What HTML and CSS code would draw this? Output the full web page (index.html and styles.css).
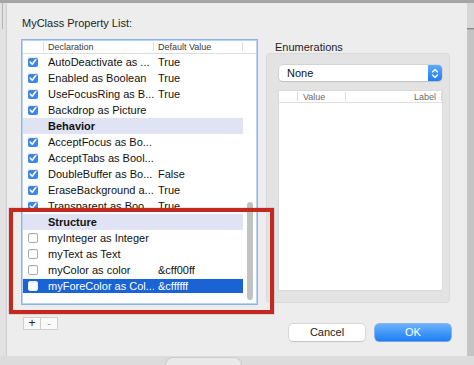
FILE: index.html
```html
<!DOCTYPE html>
<html>
<head>
<meta charset="utf-8">
<link rel="stylesheet" href="styles.css">
</head>
<body>
<div class="screen">
  <div class="topbar"></div>
  <div class="middle">
    <div class="side side-left"><div class="side-line"></div></div>
    <div class="dialog">
      <div class="col-left">
        <div class="title">MyClass Property List:</div>
        <div class="listbox">
          <div class="lhead">
            <div class="hc hc-check"></div>
            <div class="hc hc-decl">Declaration</div>
            <div class="hc hc-val">Default Value</div>
            <div class="hc hc-end"></div>
          </div>
          <div class="lbody">
            <div class="rows">
              <div class="row"><span class="cb on"></span><span class="decl">AutoDeactivate as ...</span><span class="val">True</span></div>
              <div class="row"><span class="cb on"></span><span class="decl">Enabled as Boolean</span><span class="val">True</span></div>
              <div class="row"><span class="cb on"></span><span class="decl">UseFocusRing as B...</span><span class="val">True</span></div>
              <div class="row"><span class="cb on"></span><span class="decl">Backdrop as Picture</span><span class="val"></span></div>
              <div class="row group"><span class="nocb"></span><span class="decl">Behavior</span><span class="val"></span></div>
              <div class="row"><span class="cb on"></span><span class="decl">AcceptFocus as Bo...</span><span class="val"></span></div>
              <div class="row"><span class="cb on"></span><span class="decl">AcceptTabs as Bool...</span><span class="val"></span></div>
              <div class="row"><span class="cb on"></span><span class="decl">DoubleBuffer as Bo...</span><span class="val">False</span></div>
              <div class="row"><span class="cb on"></span><span class="decl">EraseBackground a...</span><span class="val">True</span></div>
              <div class="row"><span class="cb on"></span><span class="decl">Transparent as Boo...</span><span class="val">True</span></div>
              <div class="row group"><span class="nocb"></span><span class="decl">Structure</span><span class="val"></span></div>
              <div class="row"><span class="cb"></span><span class="decl">myInteger as Integer</span><span class="val"></span></div>
              <div class="row"><span class="cb"></span><span class="decl">myText as Text</span><span class="val"></span></div>
              <div class="row"><span class="cb"></span><span class="decl">myColor as color</span><span class="val">&amp;cff00ff</span></div>
              <div class="row sel"><span class="cb"></span><span class="decl">myForeColor as Col...</span><span class="val">&amp;cffffff</span></div>
            </div>
            <div class="track"><div class="thumb"></div></div>
          </div>
        </div>
        <div class="pm">
          <div class="pmb plus">+</div>
          <div class="pmb minus">-</div>
        </div>
      </div>
      <div class="col-right">
        <div class="enum-label">Enumerations</div>
        <div class="groupbox">
          <div class="popup">
            <span class="popup-text">None</span>
            <span class="stepper">
              <svg width="8" height="11" viewBox="0 0 8 11"><path d="M1.5 4 L4 1.5 L6.5 4 M1.5 7 L4 9.5 L6.5 7" fill="none" stroke="#fff" stroke-width="1.3" stroke-linecap="round" stroke-linejoin="round"/></svg>
            </span>
          </div>
          <div class="etable">
            <div class="ehead">
              <div class="ehc ehc-first"></div>
              <div class="ehc ehc-value">Value</div>
              <div class="ehc ehc-label">Label</div>
            </div>
          </div>
        </div>
        <div class="buttons">
          <div class="btn cancel">Cancel</div>
          <div class="btn ok">OK</div>
        </div>
      </div>
    </div>
    <div class="side side-right"><div class="side-band"></div></div>
  </div>
  <div class="bottom"><div class="bump"></div></div>
  <div class="annot"></div>
</div>
</body>
</html>
```

FILE: styles.css
```css
* { box-sizing: border-box; }
html, body { margin: 0; padding: 0; }
body {
  font-family: "Liberation Sans", Arial, sans-serif;
  font-size: 11px;
  color: #1a1a1a;
  background: #dcdcdc;
}
.screen {
  position: relative;
  width: 474px;
  height: 365px;
  overflow: hidden;
  display: flex;
  flex-direction: column;
  background: #dedede;
}
.topbar {
  height: 3px;
  background: #a6a6a6;
  flex: none;
}
.middle {
  display: flex;
  height: 353px;
  flex: none;
}
.side { width: 7px; flex: none; }
.side-left {
  background: #e2e2e2;
  display: flex;
  justify-content: flex-start;
}
.side-line {
  width: 1px;
  margin-left: 2px;
  height: 26px;
  background: #b4b4b4;
}
.side-right {
  background: #d6d6d6;
  display: flex;
  flex-direction: column;
}
.side-band {
  margin-top: 25px;
  height: 2px;
  background: #8a8a8a;
  border-bottom: 1px solid #b0b0b0;
}
.side-right::after {
  content: "";
  flex: 1;
  background: #c4c4c4;
}
.dialog {
  width: 460px;
  flex: none;
  background: #ededed;
  display: flex;
  gap: 8px;
  padding-left: 14px;
  box-shadow: 0 1px 2px rgba(0,0,0,0.25);
}
.col-left {
  width: 237px;
  display: flex;
  flex-direction: column;
}
.title {
  margin-top: 13px;
  padding-left: 1px;
  height: 14px;
  line-height: 14px;
  font-size: 11px;
  color: #1e1e1e;
}
.listbox {
  margin-top: 9px;
  height: 266px;
  background: #fff;
  border: 1px solid #8db4e8;
  box-shadow: inset 0 0 0 1px #bcd4f3;
  padding: 1px;
  display: flex;
  flex-direction: column;
}
.lhead {
  height: 13px;
  display: flex;
  border-bottom: 1px solid #dedede;
  font-size: 9px;
  color: #3a3a3a;
  flex: none;
}
.hc {
  padding-left: 4px;
  border-right: 1px solid #dcdcdc;
  margin: 1px 0 2px;
  line-height: 10px;
}
.hc-check { width: 21px; }
.hc-decl { width: 110px; }
.hc-val { width: 89px; }
.hc-end { flex: 1; border-right: none; }
.lbody {
  flex: 1;
  display: flex;
}
.rows {
  width: 220px;
  display: flex;
  flex-direction: column;
}
.row {
  height: 16px;
  display: flex;
  align-items: center;
  font-size: 11px;
  color: #111;
  white-space: nowrap;
}
.cb, .nocb {
  width: 10px;
  height: 10px;
  margin-left: 5px;
  margin-right: 6px;
  flex: none;
  border-radius: 2px;
}
.cb {
  background: #fff;
  border: 1px solid #ababab;
  box-shadow: inset 0 1px 0 #f0f0f0;
}
.cb.on {
  border: none;
  background: #3b86e6 url("data:image/svg+xml;utf8,<svg xmlns='http://www.w3.org/2000/svg' width='10' height='10'><path d='M2.3 5.2 L4.2 7.2 L7.8 2.6' fill='none' stroke='white' stroke-width='1.6' stroke-linecap='round' stroke-linejoin='round'/></svg>") no-repeat center;
}
.decl {
  width: 110px;
  padding-left: 4px;
  overflow: hidden;
  flex: none;
}
.val {
  width: 89px;
  padding-left: 4px;
  flex: none;
}
.row.group {
  background: #dfe3f4;
  font-weight: bold;
}
.row.sel {
  background: #1a63d5;
  color: #fff;
  border-top: 1px solid #fff;
  border-bottom: 1px solid #fff;
}
.row.sel .cb {
  border: 1px solid #e8eefa;
  background: #fff;
}
.track {
  flex: 1;
}
.thumb {
  margin-top: 148px;
  margin-left: 4px;
  width: 6px;
  height: 98px;
  border-radius: 3px;
  background: #c2c2c2;
}
.pm {
  margin-top: 12px;
  margin-left: 2px;
  display: flex;
  height: 13px;
}
.pmb {
  width: 18px;
  height: 13px;
  background: #f9f9f9;
  border: 1px solid #cfcfcf;
  text-align: center;
  line-height: 11px;
  font-size: 12px;
}
.pmb.plus { color: #222; }
.pmb.minus { color: #9a9a9a; border-left: none; width: 17px; font-size: 11px; }
.col-right {
  width: 185px;
  display: flex;
  flex-direction: column;
}
.enum-label {
  margin-top: 37px;
  padding-left: 9px;
  height: 13px;
  line-height: 14px;
  color: #1e1e1e;
}
.groupbox {
  width: 184px;
  height: 250px;
  background: #e3e3e3;
  border: 1px solid #dadada;
  border-radius: 4px;
  padding: 11px 7px 12px 12px;
  display: flex;
  flex-direction: column;
}
.popup {
  height: 16px;
  background: #fff;
  border-radius: 4px;
  box-shadow: 0 0 0 0.5px #c4c4c4, 0 1px 1px rgba(0,0,0,0.15);
  display: flex;
  align-items: center;
  justify-content: space-between;
  flex: none;
}
.popup-text {
  padding-left: 8px;
  font-size: 11px;
  color: #111;
}
.stepper {
  width: 14px;
  height: 16px;
  border-radius: 0 4px 4px 0;
  background: linear-gradient(#5aa9fb, #1f7ff3);
  display: flex;
  align-items: center;
  justify-content: center;
}
.etable {
  margin-top: 10px;
  flex: 1;
  background: #fff;
  box-shadow: 0 0 0 0.5px #d0d0d0;
}
.ehead {
  height: 12px;
  display: flex;
  border-bottom: 1px solid #e0e0e0;
  font-size: 9px;
  color: #6a6a6a;
}
.ehc {
  border-right: 1px solid #dcdcdc;
  margin: 1px 0 1px;
  line-height: 10px;
}
.ehc-first { width: 19px; }
.ehc-value { width: 48px; padding-left: 5px; }
.ehc-label { flex: 1; text-align: right; padding-right: 5px; }
.buttons {
  margin-top: 21px;
  display: flex;
  justify-content: flex-end;
  gap: 10px;
}
.btn {
  width: 76px;
  height: 17px;
  border-radius: 4px;
  text-align: center;
  line-height: 17px;
  font-size: 11px;
}
.cancel {
  background: #fff;
  color: #1a1a1a;
  box-shadow: 0 0 0 0.5px #c2c2c2, 0 1px 1px rgba(0,0,0,0.15);
}
.ok {
  background: linear-gradient(#6ab2fb, #1c7ef5);
  color: #fff;
  box-shadow: 0 0 0 0.5px #2a7fe6, 0 1px 1px rgba(0,0,0,0.15);
}
.bottom {
  flex: 1;
  background: #dcdcdc;
  display: flex;
}
.bump {
  margin-left: 165px;
  margin-top: 1px;
  width: 77px;
  background: #e9e9e9;
  border-radius: 8px 8px 0 0;
  border: 1px solid #cdcdcd;
  border-bottom: none;
}
.annot {
  position: absolute;
  left: 9px;
  top: 208px;
  width: 265px;
  height: 106px;
  border: 4px solid #c3291f;
  box-shadow: 0 0 1px rgba(80,0,0,0.6);
  pointer-events: none;
}
```
